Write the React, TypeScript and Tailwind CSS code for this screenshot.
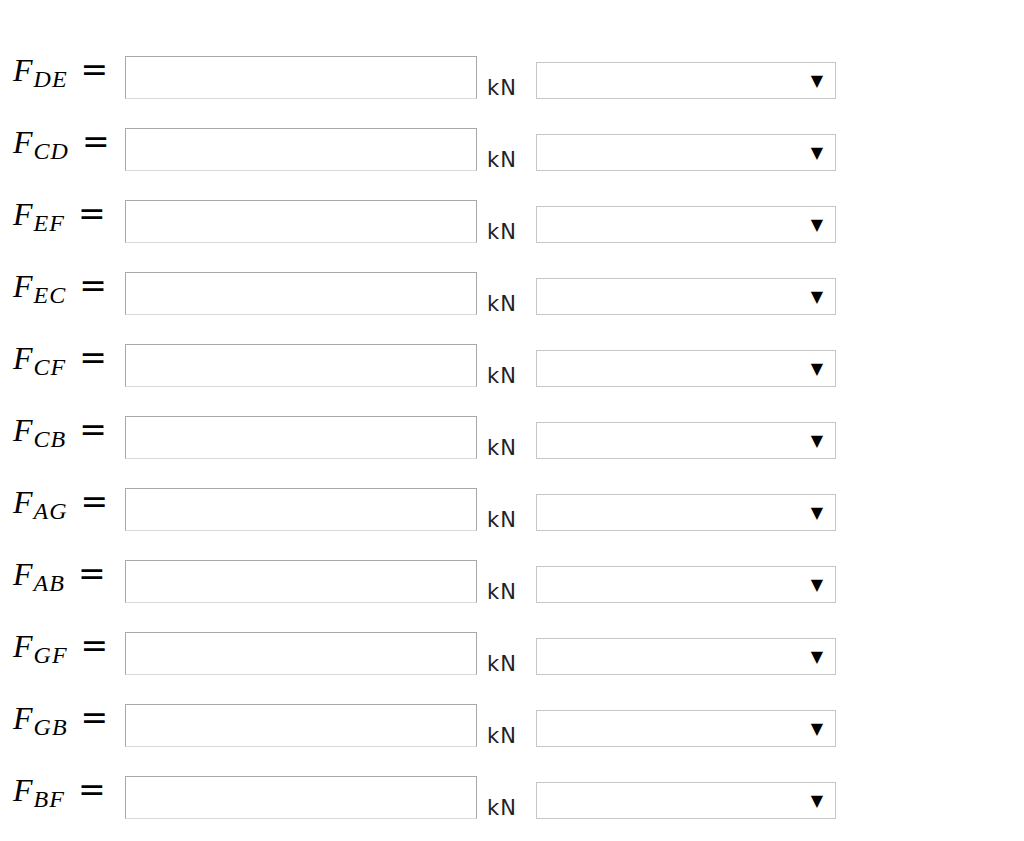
import React from 'react';

const forces = ['DE', 'CD', 'EF', 'EC', 'CF', 'CB', 'AG', 'AB', 'GF', 'GB', 'BF'];

function ForceRow({ sub }: { sub: string }) {
    return (
        <div className="flex items-start h-[43px] mb-[29px]">
            <div className="w-[112px] h-[43px] flex items-start -mt-[1px] font-['Liberation_Serif',serif] text-black">
                <span className="italic text-[32px] leading-[30px]">
                    F
                    <sub className="text-[24px] italic relative top-[6px] ml-[1px] tracking-[1px] leading-none">{sub}</sub>
                </span>
                <span className="ml-[13px] text-[33px] leading-[30px] font-['DejaVu_Serif',serif]">=</span>
            </div>
            <input
                type="text"
                className="w-[352px] h-[43px] bg-white border border-[#a8a8a8] border-b-[#dadada] outline-none"
            />
            <span className="self-end ml-[10px] w-[49px] text-[21px] leading-[22px] tracking-[1px] text-[#222] font-['DejaVu_Sans',sans-serif]">
                kN
            </span>
            <div className="mt-[6px] w-[300px] h-[37px] border border-[#c6c6c6] bg-white flex items-center justify-end pr-[12px]">
                <span className="text-[16px] leading-none text-black font-['DejaVu_Sans',sans-serif]">▼</span>
            </div>
        </div>
    );
}

export default function App() {
    return (
        <div className="w-[1024px] h-[841px] bg-white pt-[56px] pl-[13px]">
            {forces.map((f) => (
                <ForceRow key={f} sub={f} />
            ))}
        </div>
    );
}
